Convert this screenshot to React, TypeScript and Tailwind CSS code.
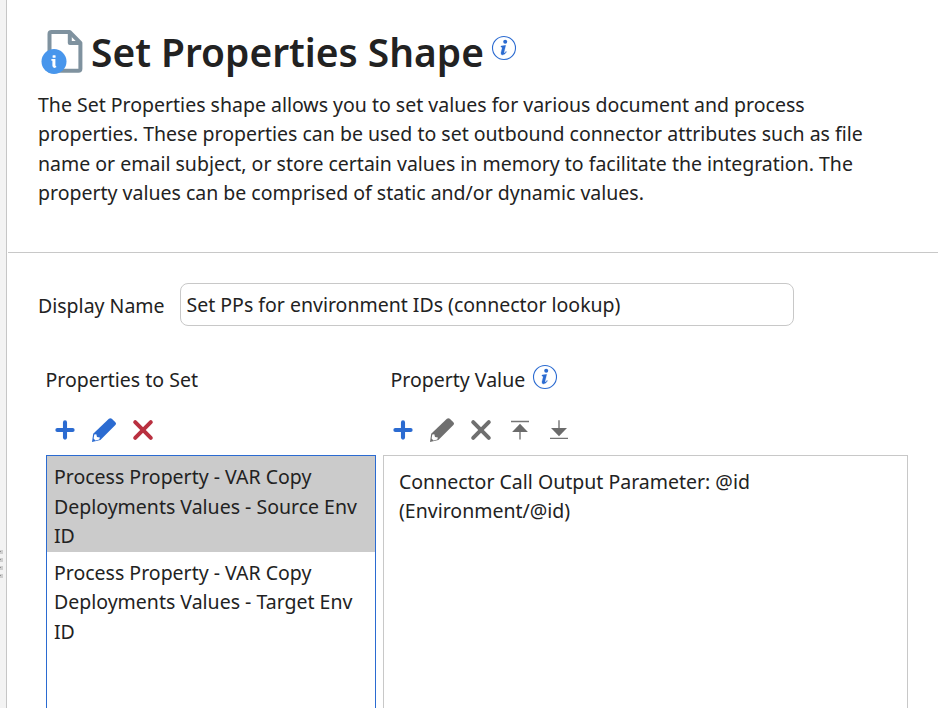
import React from "react";

const FONT = "font-['Noto_Sans',sans-serif]";

function InfoIcon({ className = "" }: { className?: string }) {
  return (
    <svg width="26" height="26" viewBox="0 0 26 26" className={className}>
      <circle cx="13" cy="13" r="11.5" fill="none" stroke="#2b6bd1" strokeWidth="1.1" />
      <circle cx="14.2" cy="6.8" r="2" fill="#2b6bd1" />
      <path
        d="M10 11.1 L14.7 10.3 L13 17.3 Q12.8 18.3 13.5 17.9 Q14.2 17.4 14.9 16.4 L15.6 16.8 Q13.8 20 11.4 20 Q9.5 19.9 10 17.8 L11.2 12.9 Q11.4 12 9.9 11.9 Z"
        fill="#2b6bd1"
        stroke="#2b6bd1"
        strokeWidth="0.3"
      />
    </svg>
  );
}

function ShapeIcon() {
  return (
    <svg width="44" height="46" viewBox="0 0 44 46" className="shrink-0">
      <path
        d="M8.5 41.7 V5 Q8.5 3 10.5 3 H28.6 L39.4 13.8 V39.8 Q39.4 41.8 37.4 41.8 H8.5 Z"
        fill="white"
        stroke="#7f929f"
        strokeWidth="4"
        strokeLinejoin="round"
      />
      <path d="M28.8 3 V14 H39.4" fill="none" stroke="#7f929f" strokeWidth="4" strokeLinejoin="round" />
      <circle cx="13" cy="32.5" r="12.5" fill="#4896ec" />
      <rect x="11.6" y="26.2" width="3" height="2.6" rx="0.6" fill="white" />
      <path d="M10.4 30 H14.4 V36.6 L15.6 38 L13.6 39 Q11.4 38.6 11.4 36.8 V31.8 H10.4 Z" fill="white" />
    </svg>
  );
}

function PlusIcon() {
  return (
    <svg width="24" height="24" viewBox="0 0 24 24">
      <path d="M12 4.4 V19.6 M4.4 12 H19.6" stroke="#2b6bd1" strokeWidth="4.1" strokeLinecap="round" />
    </svg>
  );
}

function PencilIcon({ color }: { color: string }) {
  return (
    <svg width="24" height="24" viewBox="0 0 24 24">
      <path
        d="M0 24 L1.2 15.8 L16.9 0.8 Q18.3 -0.4 19.8 0.8 L23.4 4.2 Q24.6 5.5 23.4 6.9 L8.4 22 Z"
        fill={color}
      />
      <path d="M2.3 16.4 L4.3 16.2 L5 18.9 L7.9 19.6 L7.3 21.5 L3.4 22.4 L1.6 20.6 Z" fill="white" />
    </svg>
  );
}

function CrossIcon({ color }: { color: string }) {
  return (
    <svg width="24" height="24" viewBox="0 0 24 24">
      <path d="M4.2 4.2 L19.8 19.8 M19.8 4.2 L4.2 19.8" stroke={color} strokeWidth="4" strokeLinecap="round" />
    </svg>
  );
}

function MoveTopIcon() {
  return (
    <svg width="24" height="24" viewBox="0 0 24 24">
      <path d="M3 3.5 H21 M12 12 V21.6" stroke="#747474" strokeWidth="1.4" />
      <path d="M12 5.8 L19.9 14 H4.1 Z" fill="#6b6b6b" />
    </svg>
  );
}

function MoveBottomIcon() {
  return (
    <svg width="24" height="24" viewBox="0 0 24 24">
      <path d="M3 20.4 H21 M12 2.3 V12" stroke="#747474" strokeWidth="1.4" />
      <path d="M12 18.2 L20 10 H4 Z" fill="#6b6b6b" />
    </svg>
  );
}

function Splitter() {
  return (
    <div className="flex w-[7px] shrink-0 flex-col border-r border-[#c6c6c6] bg-[#f3f3f3] pt-[550px]">
      {[0, 1, 2, 3].map((i) => (
        <div key={i} className="mb-1 flex h-1 w-[3px] shrink-0 bg-[#cfcfcf]">
          <div className="mt-px h-px w-px bg-[#8f8f8f]" />
        </div>
      ))}
    </div>
  );
}

const properties = [
  ["Process Property - VAR Copy", "Deployments Values - Source Env", "ID"],
  ["Process Property - VAR Copy", "Deployments Values - Target Env", "ID"],
];

const description = [
  "The Set Properties shape allows you to set values for various document and process",
  "properties. These properties can be used to set outbound connector attributes such as file",
  "name or email subject, or store certain values in memory to facilitate the integration. The",
  "property values can be comprised of static and/or dynamic values.",
];

export default function App() {
  return (
    <div className={`flex h-[708px] w-[938px] overflow-hidden bg-white text-[19.5px] leading-[29.25px] text-[#222222] ${FONT}`}>
      <Splitter />
      <main className="ml-px flex min-w-0 flex-1 flex-col">
        <header className="h-[253px] shrink-0 border-b border-[#c8c8c8] pt-[29px] pl-[30px]">
          <div className="flex h-[61px]">
            <div className="ml-[3px]">
              <ShapeIcon />
            </div>
            <h1 className="ml-[6px] text-[38.9px] leading-[46px] font-semibold whitespace-nowrap">Set Properties Shape</h1>
            <InfoIcon className="mt-[6px] ml-[7px]" />
          </div>
          <p className="whitespace-nowrap">
            {description.map((line) => (
              <span key={line} className="block">{line}</span>
            ))}
          </p>
        </header>

        <div className="mt-[30px] flex h-[43px] shrink-0 items-center pl-[30px]">
          <label className="w-[142px] shrink-0 pt-[2px]">Display Name</label>
          <div className="flex h-[43px] w-[614px] items-center rounded-lg border border-[#c8c8c8] px-[5.5px]">
            Set PPs for environment IDs (connector lookup)
          </div>
        </div>

        <div className="flex min-h-0 flex-1 gap-[7px] pt-[36px] pl-[38px]">
          <section className="flex w-[330px] flex-col">
            <h2 className="-ml-[0.5px] h-[56px] pt-[3px]">Properties to Set</h2>
            <div className="flex h-[37px] shrink-0 gap-[15px] pl-[7px]">
              <PlusIcon />
              <PencilIcon color="#2b6bd1" />
              <CrossIcon color="#b93040" />
            </div>
            <ul className="flex-1 border-x border-t border-[#2b6bd1]">
              {properties.map((lines, i) => (
                <li key={i} className={`pl-[7px] ${i === 0 ? "h-24 bg-[#cbcbcb] pt-[6.4px]" : "pt-[6px]"}`}>
                  {lines.map((line) => (
                    <span key={line} className="block whitespace-nowrap">{line}</span>
                  ))}
                </li>
              ))}
            </ul>
          </section>

          <section className="flex w-[525px] flex-col">
            <div className="flex h-[56px] shrink-0 pl-[7.5px]">
              <h2 className="pt-[3px]">Property Value</h2>
              <InfoIcon className="mt-[2px] ml-[6.5px]" />
            </div>
            <div className="flex h-[37px] shrink-0 gap-[15px] pl-[8px]">
              <PlusIcon />
              <PencilIcon color="#6f6f6f" />
              <CrossIcon color="#6f6f6f" />
              <MoveTopIcon />
              <MoveBottomIcon />
            </div>
            <div className="flex-1 border-x border-t border-[#c8c8c8] pt-[11px] pl-[15px]">
              Connector Call Output Parameter: @id
              <br />
              (Environment/@id)
            </div>
          </section>
        </div>
      </main>
    </div>
  );
}
